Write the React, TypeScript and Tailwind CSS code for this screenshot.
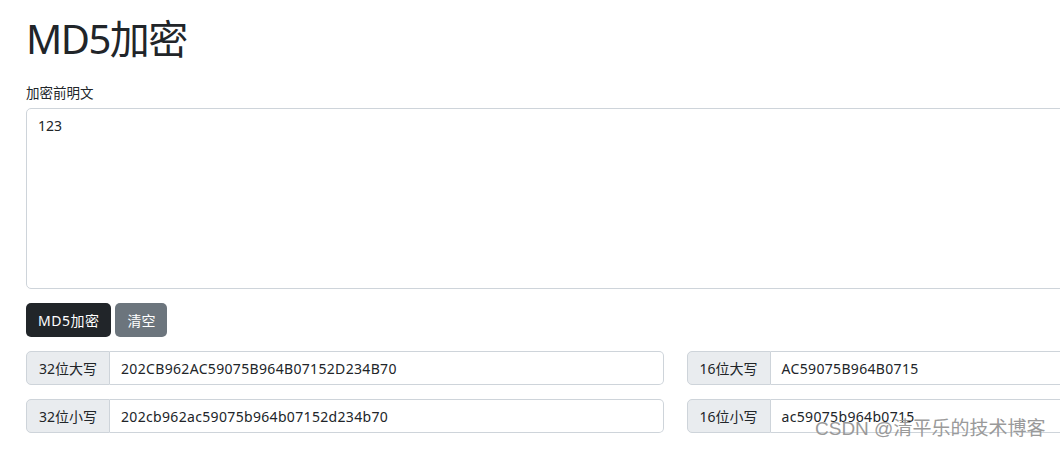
import React from "react";

const font = { fontFamily: '"Noto Sans", "Noto Sans CJK SC", sans-serif' };

function Group({ label, value }: { label: string; value: string }) {
  return (
    <div className="flex h-[34px] w-full">
      <div className="flex items-center px-[12px] bg-[#e9ecef] border border-[#ced4da] rounded-l-[5px] text-[14px] text-[#212529] whitespace-nowrap">
        {label}
      </div>
      <div className="flex flex-1 items-center pl-[11px] pr-[12px] bg-white border border-l-0 border-[#ced4da] rounded-r-[5px] text-[14px] tracking-[0.33px] text-[#212529] whitespace-nowrap">
        {value}
      </div>
    </div>
  );
}

export default function App() {
  return (
    <div className="relative w-[1060px] h-[449px] overflow-hidden bg-white" style={font}>
      <div className="w-[1350px] pl-[26px] pt-[15px]">
        <div className="w-[1298px]">
          <h1 className="text-[40px] leading-[48px] tracking-[-1.5px] text-[#212529] font-normal">MD5加密</h1>
          <div className="mt-[20px] text-[13.5px] leading-[21px] text-[#212529]">加密前明文</div>
          <div className="mt-[4px] h-[181px] border border-[#ced4da] rounded-[5px] px-[11px] py-[6px] text-[14px] leading-[21px] text-[#212529]">
            123
          </div>
          <div className="mt-[14px] flex gap-[4px]">
            <button className="h-[34px] px-[12px] bg-[#212529] text-white text-[14px] tracking-[0.5px] rounded-[5px]">MD5加密</button>
            <button className="h-[34px] px-[12px] bg-[#6c757d] text-white text-[14px] rounded-[5px]">清空</button>
          </div>
          <div className="mt-[14px] grid grid-cols-2 gap-x-[23px] gap-y-[14px]">
            <Group label="32位大写" value="202CB962AC59075B964B07152D234B70" />
            <Group label="16位大写" value="AC59075B964B0715" />
            <Group label="32位小写" value="202cb962ac59075b964b07152d234b70" />
            <Group label="16位小写" value="ac59075b964b0715" />
          </div>
        </div>
      </div>
      <div
        className="absolute left-[815px] top-[416px] text-[19px] leading-[26px] text-[#9a9a9a] whitespace-nowrap"
        style={{ fontFamily: '"Liberation Sans", "Noto Sans CJK SC", sans-serif' }}
      >
        CSDN @清平乐的技术博客
      </div>
    </div>
  );
}
